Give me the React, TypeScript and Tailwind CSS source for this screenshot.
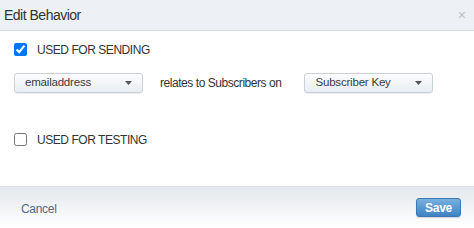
import React from "react";

function Select({ label }: { label: string }) {
  return (
    <div className="w-[129px] h-[20px] flex items-center justify-between pl-[10px] pr-[10px] rounded-[3px] border border-[#c9d0d7] bg-gradient-to-b from-[#fdfdfe] to-[#e9edf1] shadow-[0_1px_1px_rgba(0,0,0,0.08)] text-[11.5px] tracking-[-0.2px] text-[#3a3a3a]">
      <span>{label}</span>
      <svg width="7" height="4" viewBox="0 0 7 4">
        <path d="M0 0 L7 0 L3.5 4 Z" fill="#555" />
      </svg>
    </div>
  );
}

export default function App() {
  return (
    <div
      className="w-[474px] h-[228px] bg-white flex flex-col text-[#333]"
      style={{ fontFamily: '"Liberation Sans", Arial, sans-serif' }}
    >
      <div className="h-[31px] bg-[#edf0f4] border-b border-[#d3d8de] flex items-center justify-between pl-[4px] pr-[8px]">
        <span className="text-[14px] tracking-[-0.5px] text-[#333]">Edit Behavior</span>
        <span className="text-[14px] text-[#bcc2c8] leading-none">×</span>
      </div>
      <div className="flex-1 flex flex-col px-[14px] pt-[12px]">
        <label className="flex items-center h-[13px]">
          <input type="checkbox" defaultChecked className="w-[13px] h-[13px] m-0" />
          <span className="ml-[10px] text-[12px] tracking-[-0.45px] text-[#333]">USED FOR SENDING</span>
        </label>
        <div className="flex items-center mt-[17px]">
          <Select label="emailaddress" />
          <span className="ml-[17px] text-[12px] tracking-[-0.45px] text-[#333]">relates to Subscribers on</span>
          <div className="ml-[23px]">
            <Select label="Subscriber Key" />
          </div>
        </div>
        <label className="flex items-center h-[13px] mt-[40px]">
          <input type="checkbox" className="w-[13px] h-[13px] m-0" />
          <span className="ml-[10px] text-[12px] tracking-[-0.45px] text-[#333]">USED FOR TESTING</span>
        </label>
      </div>
      <div className="h-[42px] border-t border-[#dde1e5] bg-gradient-to-b from-[#e4e8ec] to-white flex items-center justify-between pl-[21px] pr-[13px]">
        <span className="text-[12px] tracking-[-0.3px] text-[#4e6b8a] mt-[2px]">Cancel</span>
        <button className="w-[45px] h-[19px] rounded-[3px] bg-gradient-to-b from-[#78b0de] to-[#3f82c4] border border-[#3a79b6] text-white text-[12px] font-bold tracking-[-0.3px] flex items-center justify-center shadow-[0_1px_1px_rgba(0,0,0,0.15)]">
          Save
        </button>
      </div>
    </div>
  );
}
